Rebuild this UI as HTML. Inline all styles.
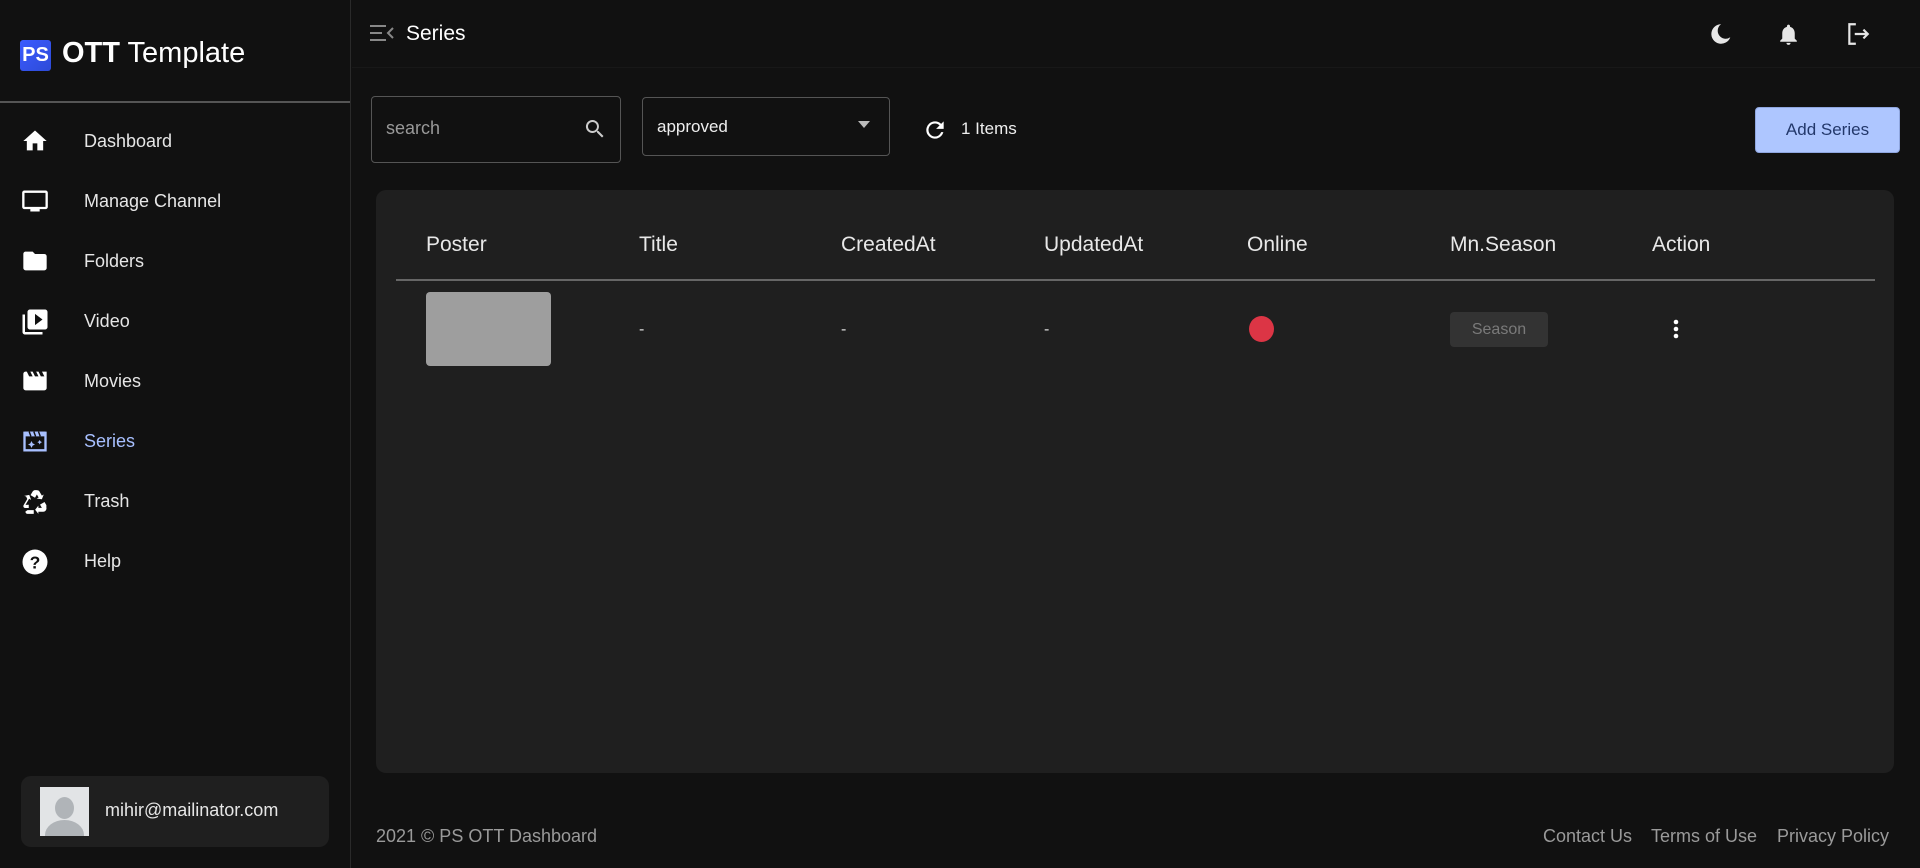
<!DOCTYPE html>
<html><head><meta charset="utf-8"><style>
*{box-sizing:border-box;margin:0;padding:0}
body{width:1920px;height:868px;background:#111;font-family:"Liberation Sans",sans-serif;color:#e6e6e6;position:relative;overflow:hidden}
.a{position:absolute;white-space:nowrap}
.nav{position:absolute;left:0;width:351px;height:40px}
.nav svg{position:absolute;left:20px;top:6px}
.nav span{position:absolute;left:84px;top:10px;font-size:18px;color:#e6e6e6}
.th{position:absolute;top:233px;font-size:21px;color:#e8e8e8}
.dash{position:absolute;top:321px;font-size:16px;color:#ddd}
.ft{position:absolute;top:826px;font-size:18px;color:#9a9a9a}
</style></head><body>
<div class="a" style="left:0;top:0;width:351px;height:868px;border-right:1px solid #2a2a2a;background:#111"></div>
<div class="a" style="left:20px;top:40px;width:31px;height:31px;border-radius:3px;background:linear-gradient(135deg,#3b5bff,#2d4bd8);color:#fff;font-weight:bold;font-size:20px;line-height:31px;text-align:center">PS</div>
<div class="a" style="left:62px;top:37px;font-size:29px;color:#fff"><b>OTT</b> Template</div>
<div class="a" style="left:0;top:101px;width:350px;height:2px;background:#555"></div>

<div class="nav" style="top:121px"><svg width="30" height="28" viewBox="0 0 24 24"><path fill="#fff" d="M10 20v-6h4v6h5v-8h3L12 3 2 12h3v8z"/></svg><span>Dashboard</span></div>
<div class="nav" style="top:181px"><svg width="30" height="28" viewBox="0 0 24 24"><path fill="#fff" d="M21 3H3c-1.1 0-2 .9-2 2v12c0 1.1.9 2 2 2h5v2h8v-2h5c1.1 0 2-.9 2-2V5c0-1.1-.9-2-2-2zm0 14H3V5h18v12z"/></svg><span>Manage Channel</span></div>
<div class="nav" style="top:241px"><svg width="30" height="28" viewBox="0 0 24 24"><path fill="#fff" d="M10 4H4c-1.1 0-2 .9-2 2v12c0 1.1.9 2 2 2h16c1.1 0 2-.9 2-2V8c0-1.1-.9-2-2-2h-8l-2-2z"/></svg><span>Folders</span></div>
<div class="nav" style="top:301px"><svg width="30" height="30" viewBox="0 0 24 24"><path fill="#fff" d="M4 6H2v14c0 1.1.9 2 2 2h14v-2H4V6zm16-4H8c-1.1 0-2 .9-2 2v12c0 1.1.9 2 2 2h12c1.1 0 2-.9 2-2V4c0-1.1-.9-2-2-2zm-8 12.5v-9l6 4.5-6 4.5z"/></svg><span>Video</span></div>
<div class="nav" style="top:361px"><svg width="30" height="28" viewBox="0 0 24 24"><path fill="#fff" d="M18 4l2 4h-3l-2-4h-2l2 4h-3l-2-4H8l2 4H7L5 4H4c-1.1 0-2 .9-2 2v12c0 1.1.9 2 2 2h16c1.1 0 2-.9 2-2V4h-4z"/></svg><span>Movies</span></div>
<div class="nav" style="top:421px"><svg width="30" height="28" viewBox="0 0 24 24"><path fill="none" stroke="#a8c0ff" stroke-width="2" d="M3 5h18v15H3z"/><path fill="#a8c0ff" d="M3 4h18v4H3zM9 12l1 2 2 1-2 1-1 2-1-2-2-1 2-1zM16 11l.7 1.3 1.3.7-1.3.7L16 15l-.7-1.3L14 13l1.3-.7z"/><path stroke="#111" stroke-width="1.2" d="M7 4l1.5 4M11 4l1.5 4M15 4l1.5 4"/></svg><span style="color:#a8c0ff">Series</span></div>
<div class="nav" style="top:481px"><svg width="30" height="30" viewBox="0 0 24 24"><path fill="#fff" d="M5.8 9.6L2.9 14.5c-.6 1 .1 2.3 1.3 2.3H7v-2.6l-2.6.1 2.9-4.9 1.6.9-1.5-4-4 .8 1.5.5zM12 2.5c-.9 0-1.5.6-2 1.3L8.4 6.5l3.6 2.1 1.5-2.6 1.4 2.4-1.6.9 4.2.5 1.5-3.8-1.5.9-2.2-3.7C14.7 2.5 13.3 2.5 12 2.5zM21.1 14.5l-1.5-2.5-3.6 2.1 1.5 2.6h-2.8v-1.8l-2.6 3.3 2.6 3.3v-1.7h3.9c1.7 0 2.9-1.8 2.5-3.3zM6 18.5h5v3H6c-1 0-1.8-.9-1.6-1.9z"/></svg><span>Trash</span></div>
<div class="nav" style="top:541px"><svg width="30" height="30" viewBox="0 0 24 24"><circle cx="12" cy="12" r="10" fill="#fff"/><text x="12" y="17" text-anchor="middle" font-size="14" font-weight="bold" fill="#111" font-family="Liberation Sans">?</text></svg><span>Help</span></div>

<div class="a" style="left:21px;top:776px;width:308px;height:71px;background:#1f1f1f;border-radius:10px"></div>
<div class="a" style="left:40px;top:787px;width:49px;height:49px;background:#e2e4e6;overflow:hidden"><div style="position:absolute;left:15px;top:10px;width:19px;height:22px;border-radius:50%;background:#b0b4b8"></div><div style="position:absolute;left:5px;top:33px;width:39px;height:30px;border-radius:50% 50% 0 0;background:#b0b4b8"></div></div>
<div class="a" style="left:105px;top:800px;font-size:18px;color:#e6e6e6">mihir@mailinator.com</div>

<div class="a" style="left:352px;top:0;width:1568px;height:68px;background:#111;border-bottom:1px solid #181818"></div>
<svg class="a" style="left:370px;top:23px" width="24" height="20" viewBox="0 0 24 20"><path stroke="#888" stroke-width="2" d="M0 3h16M0 10h12M0 17h16M23 5l-5 5 5 5" fill="none"/></svg>
<div class="a" style="left:406px;top:22px;font-size:21px;color:#fff">Series</div>
<svg class="a" style="left:1707px;top:21px" width="26" height="26" viewBox="0 0 24 24"><path fill="#e6e6e6" d="M13 3a9 9 0 1 0 8.5 12A7 7 0 0 1 13 3z"/></svg>
<svg class="a" style="left:1776px;top:21px" width="25" height="27" viewBox="0 0 24 24"><path fill="#e6e6e6" d="M12 22c1.1 0 2-.9 2-2h-4c0 1.1.9 2 2 2zm6-6v-5c0-3.1-1.6-5.6-4.5-6.3V4c0-.8-.7-1.5-1.5-1.5s-1.5.7-1.5 1.5v.7C7.6 5.4 6 7.9 6 11v5l-2 2v1h16v-1l-2-2z"/></svg>
<svg class="a" style="left:1845px;top:21px" width="26" height="26" viewBox="0 0 24 24"><path fill="none" stroke="#e6e6e6" stroke-width="2" d="M10 3H4v18h6M9 12h12M17 8l4 4-4 4"/></svg>

<div class="a" style="left:371px;top:96px;width:250px;height:67px;border:1px solid #555;border-radius:4px"></div>
<div class="a" style="left:386px;top:118px;font-size:18px;color:#999">search</div>
<svg class="a" style="left:583px;top:117px" width="24" height="24" viewBox="0 0 24 24"><path fill="#ccc" d="M15.5 14h-.8l-.3-.3A6.5 6.5 0 1 0 9.5 16c1.6 0 3.1-.6 4.2-1.6l.3.3v.8l5 5 1.5-1.5-5-5zm-6 0C7 14 5 12 5 9.5S7 5 9.5 5 14 7 14 9.5 12 14 9.5 14z"/></svg>
<div class="a" style="left:642px;top:97px;width:248px;height:59px;border:1px solid #555;border-radius:4px"></div>
<div class="a" style="left:657px;top:117px;font-size:17px;color:#eee">approved</div>
<svg class="a" style="left:856px;top:118px" width="16" height="12" viewBox="0 0 16 12"><path fill="#bbb" d="M2 3h12L8 10z"/></svg>
<svg class="a" style="left:922px;top:117px" width="26" height="26" viewBox="0 0 24 24"><path fill="#fff" d="M17.65 6.35A7.96 7.96 0 0 0 12 4a8 8 0 1 0 7.73 10h-2.08A6 6 0 1 1 12 6c1.66 0 3.140.69 4.22 1.78L13 11h7V4l-2.35 2.35z"/></svg>
<div class="a" style="left:961px;top:119px;font-size:17px;color:#eee">1 Items</div>
<div class="a" style="left:1755px;top:107px;width:145px;height:46px;background:#aec6ff;border-radius:4px;border:1px solid #8fa6df;color:#23386b;font-size:17px;line-height:44px;text-align:center">Add Series</div>

<div class="a" style="left:376px;top:190px;width:1518px;height:583px;background:#1f1f1f;border-radius:10px"></div>
<div class="th" style="left:426px">Poster</div>
<div class="th" style="left:639px">Title</div>
<div class="th" style="left:841px">CreatedAt</div>
<div class="th" style="left:1044px">UpdatedAt</div>
<div class="th" style="left:1247px">Online</div>
<div class="th" style="left:1450px">Mn.Season</div>
<div class="th" style="left:1652px">Action</div>
<div class="a" style="left:396px;top:279px;width:1479px;height:2px;background:#666"></div>
<div class="a" style="left:426px;top:292px;width:125px;height:74px;background:#9e9e9e;border-radius:4px"></div>
<div class="dash" style="left:639px">-</div>
<div class="dash" style="left:841px">-</div>
<div class="dash" style="left:1044px">-</div>
<div class="a" style="left:1249px;top:316px;width:25px;height:26px;border-radius:50%;background:#dc3545"></div>
<div class="a" style="left:1450px;top:312px;width:98px;height:35px;background:#333;border-radius:4px;color:#7a7a7a;font-size:16px;line-height:35px;text-align:center">Season</div>
<svg class="a" style="left:1670px;top:318px" width="12" height="24" viewBox="0 0 12 24"><circle cx="6" cy="4" r="2.3" fill="#fff"/><circle cx="6" cy="11" r="2.3" fill="#fff"/><circle cx="6" cy="18" r="2.3" fill="#fff"/></svg>

<div class="ft" style="left:376px">2021 © PS OTT Dashboard</div>
<div class="ft" style="left:1543px">Contact Us</div>
<div class="ft" style="left:1651px">Terms of Use</div>
<div class="ft" style="left:1777px">Privacy Policy</div>
</body></html>
